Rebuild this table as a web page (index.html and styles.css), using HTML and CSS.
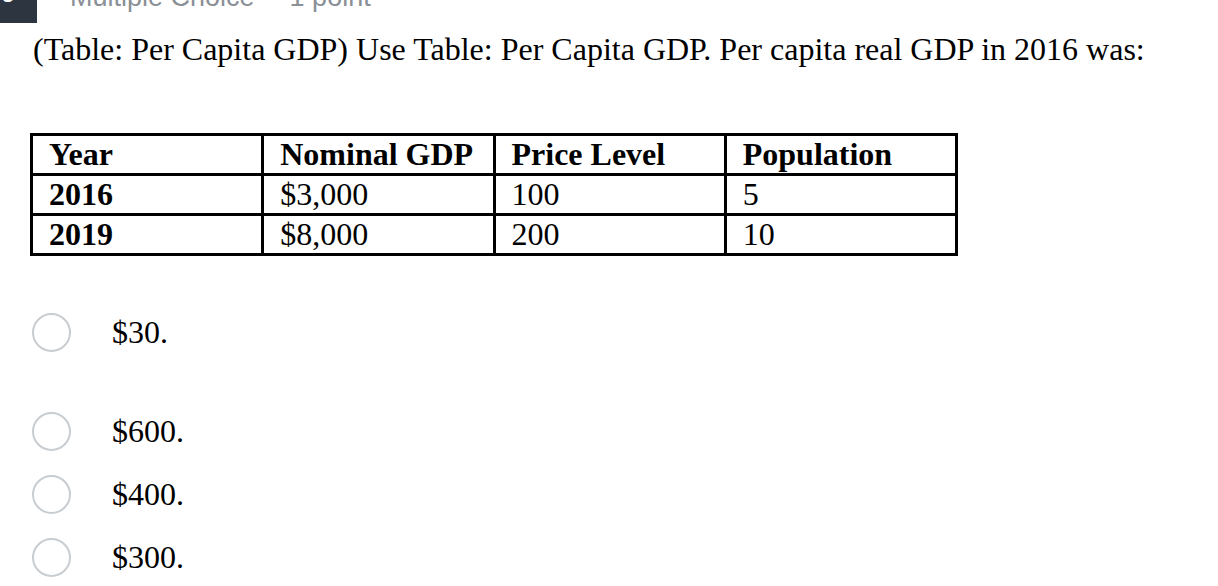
FILE: index.html
```html
<!DOCTYPE html>
<html lang="en">
<head>
<meta charset="utf-8">
<title>Per Capita GDP</title>
<link rel="stylesheet" href="styles.css">
</head>
<body>
<div class="page">
  <header class="qhead">
    <div class="qnum"><span class="qnum-text">9</span></div>
    <span class="qtype">Multiple Choice</span>
    <span class="qpoints">1 point</span>
  </header>
  <p class="question">(Table: Per Capita GDP) Use Table: Per Capita GDP. Per capita real GDP in 2016 was:</p>
  <table class="gdp">
    <tr class="head"><td>Year</td><td>Nominal GDP</td><td>Price Level</td><td>Population</td></tr>
    <tr><td class="yr">2016</td><td>$3,000</td><td>100</td><td>5</td></tr>
    <tr><td class="yr">2019</td><td>$8,000</td><td>200</td><td>10</td></tr>
  </table>
  <ul class="options">
    <li class="opt first"><span class="radio"></span><span class="label">$30.</span></li>
    <li class="opt"><span class="radio"></span><span class="label">$600.</span></li>
    <li class="opt"><span class="radio"></span><span class="label">$400.</span></li>
    <li class="opt"><span class="radio"></span><span class="label">$300.</span></li>
  </ul>
</div>
</body>
</html>
```
FILE: styles.css
```css
html, body {
  margin: 0;
  padding: 0;
  background: #ffffff;
}
.page {
  width: 1218px;
  height: 586px;
  overflow: hidden;
}
.qhead {
  display: flex;
  align-items: flex-start;
  height: 23px;
  font-family: "Liberation Sans", Arial, sans-serif;
  font-size: 27px;
  color: #8a8f96;
}
.qnum {
  width: 37px;
  height: 23px;
  background: #2d3640;
  position: relative;
  overflow: hidden;
}
.qnum-text {
  position: absolute;
  left: 1px;
  top: -20px;
  color: #fff;
  font-size: 26px;
  font-weight: bold;
  line-height: 26px;
}
.qtype {
  margin-left: 33px;
  margin-top: -18px;
  line-height: 30px;
}
.qpoints {
  margin-left: 35px;
  margin-top: -18px;
  line-height: 30px;
}
.question {
  margin: 8px 0 0 33px;
  font-family: "Liberation Serif", "Times New Roman", serif;
  font-size: 32px;
  line-height: 36px;
  color: #000;
}
.gdp {
  margin: 66px 0 0 30px;
  width: 928px;
  border-collapse: collapse;
  table-layout: fixed;
  font-family: "Liberation Serif", "Times New Roman", serif;
  font-size: 32px;
  color: #000;
}
.gdp td {
  border: 3px solid #000;
  padding: 1px 15px 2px 16px;
  line-height: 34px;
  height: 34px;
  vertical-align: middle;
}
.gdp .head td, .gdp .yr {
  font-weight: bold;
}
.options {
  list-style: none;
  margin: 56px 0 0 0;
  padding: 0;
  font-family: "Liberation Serif", "Times New Roman", serif;
  font-size: 32px;
  color: #000;
}
.opt {
  display: flex;
  align-items: center;
  height: 40px;
  margin-top: 23px;
}
.opt.first {
  margin-top: 0;
  margin-bottom: 59px;
}
.radio {
  box-sizing: border-box;
  width: 39px;
  height: 39px;
  margin-left: 32px;
  border: 2px solid #c8cdd2;
  border-radius: 50%;
}
.label {
  margin-left: 41px;
}
```
